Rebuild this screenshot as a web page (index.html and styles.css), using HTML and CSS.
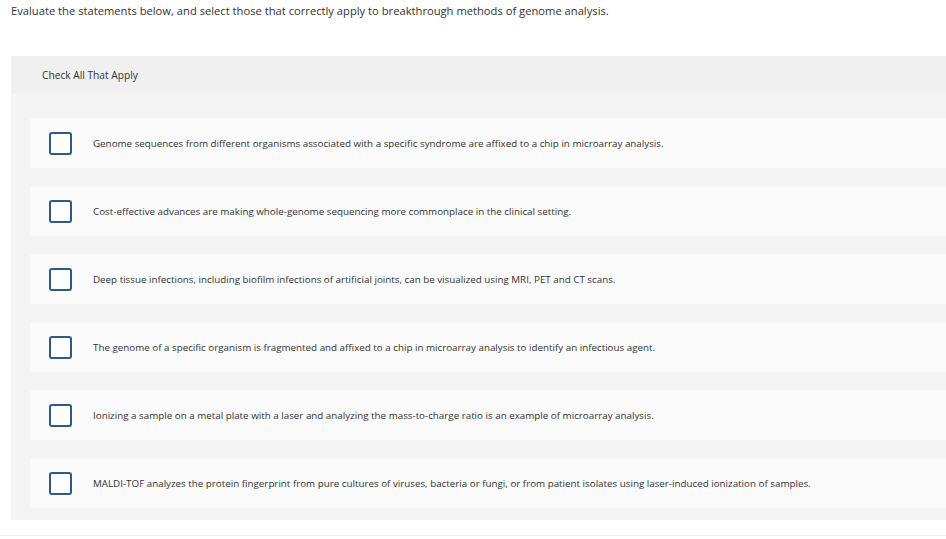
FILE: index.html
```html
<!DOCTYPE html>
<html>
<head>
<meta charset="utf-8">
<link rel="stylesheet" href="styles.css">
</head>
<body>
<div class="page">
  <p class="prompt">Evaluate the statements below, and select those that correctly apply to breakthrough methods of genome analysis.</p>
  <div class="question">
    <div class="qhead">Check All That Apply</div>
    <div class="qbody">
      <label class="choice"><span class="box"></span><span class="text">Genome sequences from different organisms associated with a specific syndrome are affixed to a chip in microarray analysis.</span></label>
      <label class="choice"><span class="box"></span><span class="text">Cost-effective advances are making whole-genome sequencing more commonplace in the clinical setting.</span></label>
      <label class="choice"><span class="box"></span><span class="text">Deep tissue infections, including biofilm infections of artificial joints, can be visualized using MRI, PET and CT scans.</span></label>
      <label class="choice"><span class="box"></span><span class="text">The genome of a specific organism is fragmented and affixed to a chip in microarray analysis to identify an infectious agent.</span></label>
      <label class="choice"><span class="box"></span><span class="text">Ionizing a sample on a metal plate with a laser and analyzing the mass-to-charge ratio is an example of microarray analysis.</span></label>
      <label class="choice"><span class="box"></span><span class="text">MALDI-TOF analyzes the protein fingerprint from pure cultures of viruses, bacteria or fungi, or from patient isolates using laser-induced ionization of samples.</span></label>
    </div>
  </div>
  <div class="rule"></div>
</div>
</body>
</html>
```
FILE: styles.css
```css
html, body {
  margin: 0;
  padding: 0;
  background: #ffffff;
  overflow: hidden;
}
body {
  font-family: "Open Sans", Lato, sans-serif;
  color: #333333;
}
.page {
  padding: 4px 0 0 11px;
}
.prompt {
  margin: 0;
  font-size: 11.2px;
  line-height: 14px;
  color: #333;
}
.question {
  margin-top: 38px;
  background: #f4f4f4;
}
.qhead {
  height: 38px;
  background: #f0f0f0;
  display: flex;
  align-items: center;
  padding-left: 31px;
  font-size: 10.2px;
  color: #333;
}
.qbody {
  padding: 24px 0 12px 19px;
  display: flex;
  flex-direction: column;
  gap: 18px;
}
.choice {
  display: flex;
  align-items: center;
  height: 50px;
  background: #fafafa;
  border-radius: 2px 0 0 2px;
  padding-left: 19px;
}
.box {
  width: 19px;
  height: 19px;
  border: 2px solid #2b5a8a;
  border-radius: 3px;
  background: #fff;
  flex: none;
}
.text {
  margin-left: 21px;
  font-size: 9.8px;
  color: #333;
}
.rule {
  margin-top: 15px;
  margin-left: -11px;
  height: 1px;
  background: #eeeeee;
}
```
